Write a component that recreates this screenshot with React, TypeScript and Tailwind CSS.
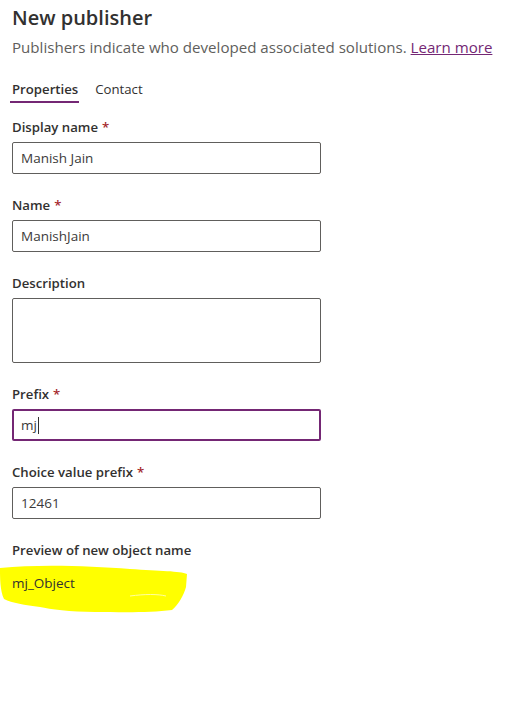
function Label({ text, required }: { text: string; required?: boolean }) {
  return (
    <div className="h-5 mb-[5px] text-[13.2px] leading-5 font-semibold text-[#323130]">
      {text}
      {required && <span className="text-[#a4262c] ml-1">*</span>}
    </div>
  );
}

function Field({ label, value, required, focused }: any) {
  return (
    <div className="mb-[21px]">
      <Label text={label} required={required} />
      <div
        className={
          focused
            ? "h-8 w-[309px] rounded-[2px] border-2 border-[#742774] px-[7px] flex items-center text-[13.5px] text-[#3b3a39]"
            : "h-8 w-[309px] rounded-[2px] border border-[#605e5c] px-2 flex items-center text-[13.5px] text-[#3b3a39]"
        }
      >
        {value}
        {focused && <span className="inline-block w-px h-[17px] bg-[#323130] ml-px" />}
      </div>
    </div>
  );
}

export default function App() {
  return (
    <div className="min-h-[712px] w-[521px] bg-white pl-3 pt-[6px] font-['Open_Sans',sans-serif]">
      <h1 className="text-[20px] leading-6 font-semibold text-[#323130]">New publisher</h1>
      <p className="mt-[5px] text-[15.1px] leading-6 text-[#605e5c] whitespace-nowrap">
        Publishers indicate who developed associated solutions.{" "}
        <a className="text-[#742774] underline">Learn more</a>
      </p>
      <div className="mt-5 flex gap-[17px] text-[13.2px] leading-5">
        <div className="relative font-semibold text-[#323130]">
          Properties
          <div className="absolute left-[-2px] right-[-1px] top-[22px] h-[2px] bg-[#742774]" />
        </div>
        <div className="text-[#323130]">Contact</div>
      </div>
      <div className="mt-[18px]">
        <Field label="Display name" required value="Manish Jain" />
        <Field label="Name" required value="ManishJain" />
        <div className="mb-[21px]">
          <Label text="Description" />
          <div className="h-[65px] w-[309px] rounded-[2px] border border-[#605e5c]" />
        </div>
        <Field label="Prefix" required value="mj" focused />
        <Field label="Choice value prefix" required value="12461" />
        <Label text="Preview of new object name" />
        <div className="relative ml-[-12px] mt-[2px] h-12 w-[200px]">
          <svg className="absolute left-0 top-0" width="200" height="50" viewBox="0 0 200 50">
            <path
              d="M0 3 C40 -1 90 1 130 4 C160 6 180 6 187 9 L186 22 C184 30 178 40 172 45 C150 48 120 47 95 47 C70 47 50 44 40 42 C25 40 12 38 4 34 C0 26 0 12 0 3 Z"
              fill="#ffff00"
            />
            <path d="M130 31 C145 29 158 29 166 31" stroke="#ffffa0" strokeWidth="1" fill="none" />
          </svg>
          <div className="relative pl-3 pt-[8px] text-[13.5px] leading-5 text-[#323130]">mj_Object</div>
        </div>
      </div>
    </div>
  );
}
